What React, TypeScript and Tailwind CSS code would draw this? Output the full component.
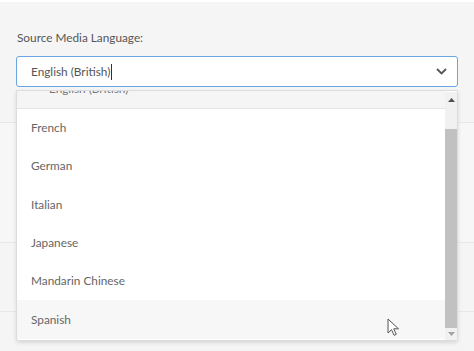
import React from "react";

const languages = ["French", "German", "Italian", "Japanese", "Mandarin Chinese", "Spanish"];

export default function App() {
  const [selected] = React.useState("English (British)");
  const hovered = "Spanish";

  return (
    <div className="relative h-[351px] w-full overflow-hidden bg-[#f5f5f5] font-['Lato','Liberation_Sans',sans-serif] text-[#555]">
      <div className="h-[2px] bg-white" />
      {/* form row behind the menu */}
      <div className="h-[121px] border-b border-[#e8e8e8] px-4 pt-[28px]">
        <p className="pl-[1px] text-[11.8px] leading-[16px] text-[#555]">Source Media Language:</p>
        <div className="relative mt-[10px]">
          <div className="flex h-[31px] items-center rounded-[3px] border border-[#6aa5e3] bg-white pl-[14px] pr-[10px]">
            <span className="text-[11.8px] text-[#555]">{selected}</span>
            <span className="ml-[1px] h-[16px] w-[1px] bg-[#333]" />
            <svg className="ml-auto" width="11" height="7" viewBox="0 0 11 7" fill="none">
              <path d="M1 1l4.5 4.5L10 1" stroke="#555" strokeWidth="1.8" />
            </svg>
          </div>

          <div className="absolute left-0 right-0 top-full z-10 mt-[3px] flex h-[251px] rounded-b-[3px] border border-[#dcdcdc] bg-white shadow-[0_2px_4px_rgba(0,0,0,0.12)]">
            <ul className="flex-1 overflow-hidden">
              <li className="-mt-[21px] flex h-[38.5px] items-center border-b border-[#e4e4e4] bg-[#f5f5f5] pl-[18px] text-[11.8px] text-[#777]">
                <span className="w-[14px] text-[10px]">✓</span>
                <span>English (British)</span>
              </li>
              {languages.map((lang) => (
                <li
                  key={lang}
                  className={`flex h-[38.4px] items-center pl-[14px] text-[11.8px] text-[#666] ${lang === hovered ? "bg-[#f7f7f7]" : ""}`}
                >
                  {lang}
                </li>
              ))}
            </ul>
            <div className="mt-[1px] flex w-[12px] flex-col items-center bg-[#f1f1f1]">
              <div className="flex h-[16px] items-center justify-center">
                <svg width="7" height="4" viewBox="0 0 7 4">
                  <path d="M0 4L3.5 0L7 4z" fill="#505050" />
                </svg>
              </div>
              <div className="mt-[21px] h-[199px] w-[12px] bg-[#c1c1c1]" />
              <div className="flex flex-1 items-center justify-center">
                <svg width="7" height="4" viewBox="0 0 7 4">
                  <path d="M0 0L7 0L3.5 4z" fill="#a3a3a3" />
                </svg>
              </div>
            </div>
          </div>
        </div>
      </div>
      <div className="h-[120px] border-b border-[#e8e8e8] bg-[#f7f7f7]" />
      <div className="h-[69px] border-b border-[#e8e8e8]" />

      {/* mouse pointer */}
      <svg className="absolute left-[387px] top-[318px] z-20" width="13" height="18" viewBox="0 0 13 18">
        <path d="M1 1v14l3.5-3.3 2.6 5.6 2.2-1-2.6-5.5H11.5z" fill="#fff" stroke="#555" strokeWidth="1" strokeLinejoin="round" />
      </svg>
    </div>
  );
}
